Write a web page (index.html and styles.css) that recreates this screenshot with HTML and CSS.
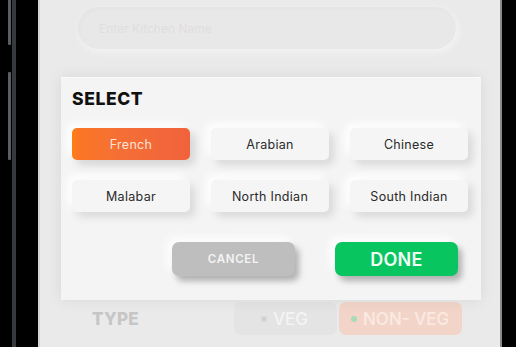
FILE: index.html
```html
<!DOCTYPE html>
<html>
<head>
<meta charset="utf-8">
<link rel="stylesheet" href="styles.css">
</head>
<body>
<div class="device">
  <div class="frame-left">
    <div class="side-buttons">
      <div class="btn-a"></div>
      <div class="btn-b"></div>
    </div>
    <div class="strip"></div>
  </div>
  <div class="screen">
    <div class="input-pill"><span class="placeholder">Enter Kitchen Name</span></div>
    <div class="type-row">
      <span class="type-label">TYPE</span>
      <div class="type-pills">
        <div class="pill veg"><span class="dot dot-veg"></span>VEG</div>
        <div class="pill nonveg"><span class="dot dot-nonveg"></span>NON- VEG</div>
      </div>
    </div>
    <div class="modal">
      <div class="modal-title">SELECT</div>
      <div class="chips">
        <div class="chip active">French</div>
        <div class="chip">Arabian</div>
        <div class="chip">Chinese</div>
        <div class="chip">Malabar</div>
        <div class="chip">North Indian</div>
        <div class="chip">South Indian</div>
      </div>
      <div class="actions">
        <div class="btn cancel">CANCEL</div>
        <div class="btn done">DONE</div>
      </div>
    </div>
  </div>
  <div class="frame-right"></div>
</div>
</body>
</html>
```
FILE: styles.css
```css
* { box-sizing: border-box; }
html, body { margin: 0; padding: 0; }
body {
  width: 516px;
  height: 347px;
  overflow: hidden;
  background: #000;
  font-family: Inter, "Liberation Sans", sans-serif;
}
.device {
  display: flex;
  width: 516px;
  height: 347px;
}
.frame-left {
  width: 38px;
  display: flex;
  padding-left: 8px;
  gap: 1px;
  background: #000;
}
.side-buttons {
  width: 3px;
  display: flex;
  flex-direction: column;
}
.btn-a {
  height: 45px;
  background: #5a5d62;
  border-radius: 0 0 1px 1px;
}
.btn-b {
  height: 88px;
  margin-top: 27px;
  background: #5a5d62;
  border-radius: 1px;
}
.strip {
  width: 4px;
  height: 100%;
  background: #36393e;
}
.screen {
  position: relative;
  width: 464px;
  height: 347px;
  background: #ebeaea;
  border-left: 2px solid #d4d4d4;
  border-right: 2px solid #8a8a8a;
  display: flex;
  flex-direction: column;
}
.frame-right {
  flex: 1;
  background: #000;
}
.input-pill {
  margin: 7px 0 0 38px;
  width: 378px;
  height: 42px;
  border-radius: 21px;
  background: #e9e8e8;
  box-shadow: inset 2px 2px 5px rgba(0,0,0,0.02), 2px 3px 8px rgba(255,255,255,0.5);
  display: flex;
  align-items: center;
  padding-left: 21px;
}
.placeholder {
  font-size: 12px;
  color: #dfdede;
}
.type-row {
  margin-top: 253px;
  display: flex;
  align-items: center;
}
.type-label {
  margin-left: 52px;
  font-size: 17px;
  font-weight: 800;
  color: #c6c6c6;
  letter-spacing: 0.3px;
  width: 142px;
}
.type-pills {
  display: flex;
  gap: 2px;
}
.pill {
  height: 33px;
  border-radius: 7px;
  display: flex;
  align-items: center;
  font-size: 17px;
  font-weight: 500;
}
.veg {
  width: 103px;
  background: #e4e4e4;
  color: #f4f4f4;
  padding-left: 27px;
}
.nonveg {
  width: 123px;
  background: #f2d5c8;
  color: #fbeae3;
  padding-left: 12px;
}
.dot {
  width: 6px;
  height: 6px;
  border-radius: 1px;
  margin-right: 6px;
}
.dot-veg { background: #cfcaca; box-shadow: inset 0 0 0 1.5px #dedada; }
.dot-nonveg { background: #a7dbb7; border-radius: 3px; }
.modal {
  position: absolute;
  left: 21px;
  top: 77px;
  width: 420px;
  height: 223px;
  background: #f4f4f4;
  box-shadow: 0 0 14px rgba(0,0,0,0.08);
  border-top: 1px solid #fafafa;
  padding: 11px 0 0 11px;
}
.modal-title {
  font-size: 17.5px;
  line-height: 20px;
  font-weight: 800;
  color: #111;
  letter-spacing: 0.6px;
}
.chips {
  margin-top: 19px;
  display: grid;
  grid-template-columns: 118px 118px 118px;
  column-gap: 21px;
  row-gap: 20px;
}
.chip {
  height: 32px;
  border-radius: 5px;
  background: #f5f5f5;
  box-shadow: 5px 5px 8px rgba(0,0,0,0.11), -5px -5px 9px rgba(255,255,255,0.95);
  display: flex;
  align-items: center;
  justify-content: center;
  font-size: 12.5px;
  font-weight: 400;
  color: #2a2a2a;
  letter-spacing: 0.3px;
}
.chip.active {
  background: linear-gradient(90deg, #ff8111 0%, #fb7726 5%, #f56f35 40%, #f0623c 100%);
  color: #fde3d6;
  box-shadow: 5px 5px 8px rgba(0,0,0,0.13), -5px -5px 9px rgba(255,255,255,0.95);
}
.actions {
  margin-top: 30px;
  margin-left: 100px;
  display: flex;
  gap: 40px;
}
.btn {
  width: 123px;
  height: 34px;
  border-radius: 7px;
  display: flex;
  align-items: center;
  justify-content: center;
  color: #fff;
  font-weight: 600;
}
.cancel {
  background: #bebebe;
  font-size: 11.5px;
  letter-spacing: 0.7px;
  color: #f4f4f4;
  box-shadow: 4px 5px 6px rgba(0,0,0,0.28), -5px -5px 10px rgba(255,255,255,0.9);
}
.done {
  background: #09c55f;
  font-size: 18px;
  letter-spacing: 0.3px;
  color: #f2fff7;
  box-shadow: 4px 5px 6px rgba(0,0,0,0.28), -5px -5px 10px rgba(255,255,255,0.9);
}
```
